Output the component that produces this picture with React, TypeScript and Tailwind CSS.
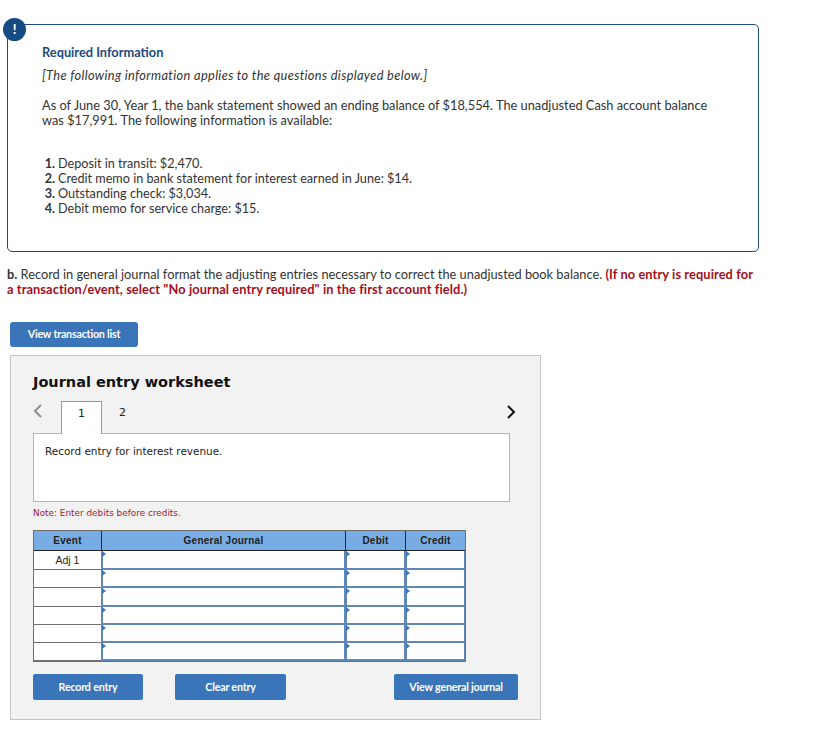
import React from "react";

const items = [
  { n: "1.", text: "Deposit in transit: $2,470." },
  { n: "2.", text: "Credit memo in bank statement for interest earned in June: $14." },
  { n: "3.", text: "Outstanding check: $3,034." },
  { n: "4.", text: "Debit memo for service charge: $15." },
];

const rows = ["Adj 1", "", "", "", "", ""];
const rowHeights = ["h-[19px]", "h-[18px]", "h-[19px]", "h-[18px]", "h-[18px]", "h-[18px]"];

const Cell = ({ className }: { className: string }) => (
  <div className={`relative border-r border-b-2 border-l-2 border-[#5f87b8] bg-white ${className}`}>
    <div className="absolute -left-[1px] top-0 h-0 w-0 border-y-[3px] border-l-[4px] border-y-transparent border-l-[#3a76ba]" />
  </div>
);

const Button = ({ label, className }: { label: string; className: string }) => (
  <button className={`h-[26px] whitespace-nowrap rounded-[2px] bg-[#3975b8] text-[10.7px] font-bold tracking-[-0.2px] text-white [font-family:Lato,sans-serif] ${className}`}>
    {label}
  </button>
);

export default function App() {
  return (
    <div className="h-[739px] w-[835px] bg-white pt-6 text-[#333] [font-family:Lato,'Liberation_Sans',sans-serif]">
      <div className="relative ml-[7px] h-[228px] w-[752px] rounded-[5px] border border-[#1d4a80] pl-[34px] pt-[20px] text-[12.8px]">
        <div className="absolute -left-[5px] -top-[7px] flex h-[23px] w-[23px] items-center justify-center rounded-full bg-[#164a85] text-[13px] font-black text-white">
          !
        </div>
        <div className="font-bold leading-[15px] text-[#1c4a7c]">Required Information</div>
        <div className="mt-[8px] italic leading-[15px] tracking-[0.35px]">[The following information applies to the questions displayed below.]</div>
        <div className="mt-[15px] w-[680px] leading-[15px]">
          As of June 30, Year 1, the bank statement showed an ending balance of $18,554. The unadjusted Cash account balance was $17,991. The following information is available:
        </div>
        <div className="mt-[28px] text-[12.65px] leading-[15px]">
          {items.map((item) => (
            <div key={item.n} className="flex">
              <span className="w-[16px] pr-[3px] text-right font-bold">{item.n}</span>
              <span>{item.text}</span>
            </div>
          ))}
        </div>
      </div>

      <div className="ml-[7px] mt-[15px] w-[752px] text-[12.8px] leading-[15px]">
        <b>b.</b> Record in general journal format the adjusting entries necessary to correct the unadjusted book balance.{" "}
        <b className="font-bold tracking-[0.1px] text-[#a50e1c]">
          (If no entry is required for a transaction/event, select "No journal entry required" in the first account field.)
        </b>
      </div>

      <button className="ml-[10px] mt-[25px] block h-[25px] w-[128px] rounded-[3px] bg-[#3975b8] text-[10.7px] font-bold tracking-[-0.2px] text-white">
        View transaction list
      </button>

      <div className="ml-[10px] mt-[8px] h-[365px] w-[531px] border border-[#c4c4c4] bg-[#f2f2f2] pl-[22px] [font-family:'DejaVu_Sans',sans-serif]">
        <div className="mt-[17px] text-[14.5px] font-bold leading-[18px] text-[#111]">Journal entry worksheet</div>

        <div className="relative mt-[10px] flex h-[33px] w-[477px]">
          <svg width="10" height="14" viewBox="0 0 10 14" className="mt-[3px]">
            <path d="M8 1 L2 7 L8 13" fill="none" stroke="#8a8f96" strokeWidth="2" />
          </svg>
          <div className="relative z-10 ml-[18px] flex h-[33px] w-[41px] items-center justify-center border border-b-0 border-[#999] bg-white pb-[8px] text-[11px] text-[#222]">
            1
          </div>
          <div className="flex h-[24px] w-[41px] items-center justify-center text-[11px] text-[#222]">2</div>
          <svg width="10" height="14" viewBox="0 0 10 14" className="absolute -right-[6px] top-[4px]">
            <path d="M2 1 L8 7 L2 13" fill="none" stroke="#111" strokeWidth="2" />
          </svg>
        </div>

        <div className="-mt-px h-[69px] w-[477px] border border-[#b5b5b5] bg-white pl-[11px] pt-[10px] text-[10.45px] leading-[14px] text-[#222]">
          Record entry for interest revenue.
        </div>
        <div className="mt-[5px] text-[8.9px] leading-[13px] text-[#a0183c]">Note: Enter debits before credits.</div>

        <div className="mt-[10px] w-[433px] border border-[#6f6f6f] [font-family:'Liberation_Sans',sans-serif]">
          <div className="flex h-[19px] bg-[#78ace4] text-[10px] font-bold leading-[19px] tracking-[0.25px] text-[#222]">
            <div className="w-[68px] border-r border-[#1c2a3a] text-center">Event</div>
            <div className="w-[244px] border-r border-[#1c2a3a] text-center">General Journal</div>
            <div className="w-[60px] border-r border-[#1c2a3a] text-center">Debit</div>
            <div className="flex-1 text-center">Credit</div>
          </div>
          <div className="border-t border-[#222]">
            {rows.map((event, i) => (
              <div key={i} className={`flex ${rowHeights[i]}`}>
                <div className="w-[67px] border-b border-[#6f6f6f] bg-white text-center text-[10.5px] leading-[18px] text-[#222]">
                  {event}
                </div>
                <Cell className="w-[244px]" />
                <Cell className="w-[60px]" />
                <Cell className="flex-1" />
              </div>
            ))}
          </div>
        </div>

        <div className="mt-[12px] flex w-[485px]">
          <Button label="Record entry" className="w-[110px]" />
          <Button label="Clear entry" className="ml-[32px] w-[111px]" />
          <Button label="View general journal" className="ml-auto w-[124px]" />
        </div>
      </div>
    </div>
  );
}
